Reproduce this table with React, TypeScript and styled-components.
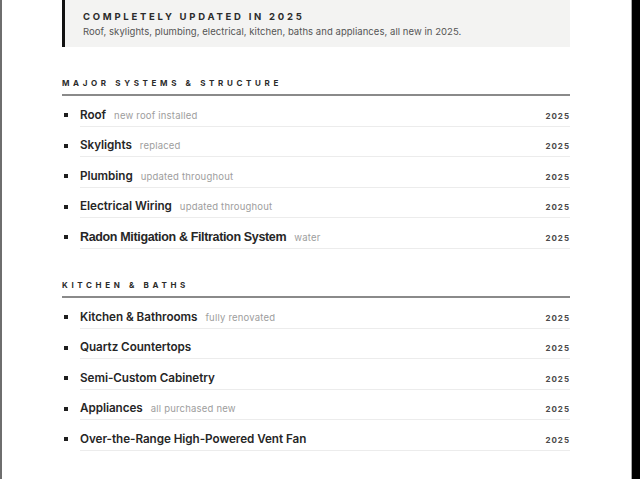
import React from "react";
import styled, { createGlobalStyle } from "styled-components";

const Global = createGlobalStyle`
  html, body { margin: 0; padding: 0; background: #000; }
  body { font-family: Inter, "Liberation Sans", sans-serif; -webkit-font-smoothing: antialiased; }
`;

const Page = styled.div`
  width: 632px;
  height: 479px;
  background: #fff;
  border-left: 2px solid #6e6e6e;
  border-right: 1px solid #a8a8a8;
  padding: 0 0 0 60px;
  box-sizing: border-box;
  overflow: hidden;
`;

const Column = styled.div`
  width: 508px;
  display: flex;
  flex-direction: column;
`;

const Callout = styled.div`
  background: #f3f3f2;
  border-left: 3px solid #111;
  padding: 10px 18px;
  display: flex;
  flex-direction: column;
  gap: 3px;
`;

const CalloutTitle = styled.div`
  font-size: 9.5px;
  line-height: 13px;
  font-weight: 700;
  letter-spacing: 2.75px;
  color: #2b2b2b;
`;

const CalloutText = styled.div`
  font-size: 9.5px;
  line-height: 11px;
  color: #555;
  letter-spacing: 0.05px;
`;

const Section = styled.section`
  margin-top: 30px;
  display: flex;
  flex-direction: column;
  gap: 7.6px;
`;

const SectionHead = styled.h2<{ $faint?: boolean }>`
  margin: 0;
  font-size: 8px;
  line-height: 12px;
  font-weight: 700;
  letter-spacing: 3.65px;
  color: ${(p) => (p.$faint ? "#c8c8c8" : "#2b2b2b")};
  padding-bottom: 5px;
  border-bottom: 2px solid ${(p) => (p.$faint ? "#e0e0e0" : "#8a8a8a")};
`;

const Row = styled.div`
  display: flex;
  align-items: center;
`;

const Bullet = styled.span`
  width: 4px;
  height: 4px;
  background: #1e1e1e;
  margin: 0 12px 0 2px;
  flex: none;
`;

const RowBody = styled.div`
  flex: 1;
  display: flex;
  align-items: baseline;
  padding: 4px 0;
  border-bottom: 1px solid #ececec;
`;

const ItemName = styled.span<{ $condensed?: boolean }>`
  font-family: ${(p) =>
    p.$condensed ? `"Liberation Sans", Arial, sans-serif` : `Inter, "Liberation Sans", sans-serif`};
  font-size: ${(p) => (p.$condensed ? "12.5px" : "11.7px")};
  line-height: 14px;
  font-weight: ${(p) => (p.$condensed ? 700 : 600)};
  color: #262626;
  letter-spacing: ${(p) => (p.$condensed ? "-0.35px" : "-0.05px")};
`;

const Note = styled.span`
  margin-left: 8px;
  font-size: 9.5px;
  letter-spacing: 0.2px;
  color: #9d9d9d;
`;

const Year = styled.span`
  margin-left: auto;
  font-size: 8px;
  font-weight: 700;
  letter-spacing: 1px;
  color: #4a4a4a;
`;

type Item = { name: string; note?: string; condensed?: boolean };

const sections: { title: string; items: Item[] }[] = [
  {
    title: "MAJOR SYSTEMS & STRUCTURE",
    items: [
      { name: "Roof", note: "new roof installed" },
      { name: "Skylights", note: "replaced" },
      { name: "Plumbing", note: "updated throughout" },
      { name: "Electrical Wiring", note: "updated throughout" },
      { name: "Radon Mitigation & Filtration System", note: "water", condensed: true },
    ],
  },
  {
    title: "KITCHEN & BATHS",
    items: [
      { name: "Kitchen & Bathrooms", note: "fully renovated" },
      { name: "Quartz Countertops" },
      { name: "Semi-Custom Cabinetry" },
      { name: "Appliances", note: "all purchased new" },
      { name: "Over-the-Range High-Powered Vent Fan" },
    ],
  },
];

export default function App() {
  return (
    <>
      <Global />
      <Page>
        <Column>
          <Callout>
            <CalloutTitle>COMPLETELY UPDATED IN 2025</CalloutTitle>
            <CalloutText>
              Roof, skylights, plumbing, electrical, kitchen, baths and appliances, all new in 2025.
            </CalloutText>
          </Callout>
          {sections.map((s) => (
            <Section key={s.title}>
              <SectionHead>{s.title}</SectionHead>
              {s.items.map((it) => (
                <Row key={it.name}>
                  <Bullet />
                  <RowBody>
                    <ItemName $condensed={it.condensed}>{it.name}</ItemName>
                    {it.note && <Note>{it.note}</Note>}
                    <Year>2025</Year>
                  </RowBody>
                </Row>
              ))}
            </Section>
          ))}
          <Section>
            <SectionHead $faint>EXTERIOR & GROUNDS</SectionHead>
          </Section>
        </Column>
      </Page>
    </>
  );
}
